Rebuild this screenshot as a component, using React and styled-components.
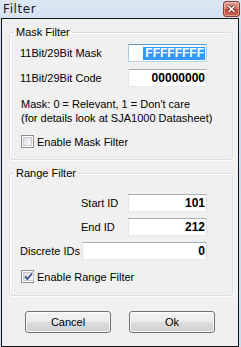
import React from 'react'
import styled, { createGlobalStyle } from 'styled-components'

const GlobalStyle = createGlobalStyle`
  html, body {
    margin: 0;
    padding: 0;
  }
  body {
    width: 241px;
    height: 347px;
    overflow: hidden;
    background: #d4e1f1;
  }
  * {
    box-sizing: border-box;
  }
`

const Window = styled.div`
  width: 241px;
  height: 347px;
  display: flex;
  flex-direction: column;
  background: linear-gradient(#dce7f4, #cbdaec 40px, #cfdcee);
  font-family: "Liberation Sans", Arial, sans-serif;
  font-size: 11px;
  color: #000;
`

const TitleBar = styled.div`
  height: 18px;
  flex: none;
  display: flex;
  align-items: center;
  justify-content: space-between;
  padding: 0 1px 0 3px;
`

const Title = styled.span`
  font-family: "DejaVu Sans", sans-serif;
  font-size: 12px;
  letter-spacing: 0.6px;
  color: #1b1b1b;
`

const CloseButton = styled.div`
  width: 17px;
  height: 16px;
  border: 1px solid #8d3b31;
  border-radius: 3px;
  background: linear-gradient(#e4a497, #d2705f 50%, #c24b3b 51%, #cc6450);
  box-shadow: inset 0 0 0 1px rgba(255, 255, 255, 0.35);
  display: flex;
  align-items: center;
  justify-content: center;
`

const Client = styled.div`
  flex: 1;
  margin: 0 2px 0 1px;
  border: 1px solid #141414;
  background: #f0f0f0;
  padding: 7px 5px 0 7px;
  display: flex;
  flex-direction: column;
`

const Group = styled.fieldset`
  margin: ${({ $top }) => $top || 0}px 0 0 0;
  padding: ${({ $pt }) => $pt}px 25px ${({ $pb }) => $pb}px 10px;
  border: 1px solid #d5dfe5;
  border-radius: 3px;
  box-shadow: inset 1px 1px 0 #fff, 1px 1px 0 #fff;
  min-width: 0;
  display: flex;
  flex-direction: column;
  gap: ${({ $gap }) => $gap}px;
`

const Legend = styled.legend`
  padding: 0 2px;
  margin-left: -6px;
  line-height: 13px;
  font-size: 11px;
`

const Row = styled.div`
  display: flex;
  align-items: center;
  height: 18px;
  padding-left: ${({ $indent }) => $indent || 0}px;
`

const Label = styled.span`
  width: ${({ $w }) => $w}px;
  flex: none;
  white-space: nowrap;
`

const Field = styled.div`
  height: 18px;
  width: ${({ $w }) => ($w ? `${$w}px` : 'auto')};
  flex: ${({ $w }) => ($w ? 'none' : 1)};
  border: 1px solid;
  border-color: ${({ $focus }) =>
    $focus ? '#5d97c9 #b3d1ec #b7d9ed #a9cae6' : '#abadb3 #dbdfe6 #e3e9ef #e2e3ea'};
  background: #fff;
  display: flex;
  align-items: center;
  justify-content: flex-end;
  padding-right: 1px;
  font-size: 12px;
  font-weight: bold;
`

const Selected = styled.span`
  background: #3399ff;
  color: #fff;
  line-height: 13px;
  padding: 0 1px 0 2px;
`

const Note = styled.div`
  margin-top: 3px;
  line-height: 14px;
  padding-left: 1px;
  white-space: nowrap;
`

const CheckRow = styled.div`
  display: flex;
  align-items: center;
  gap: 3px;
  height: 13px;
  margin-top: ${({ $mt }) => $mt}px;
  padding-left: 1px;
`

const Box = styled.span`
  width: 13px;
  height: 13px;
  flex: none;
  border: 1px solid #8e8f8f;
  background: #fff;
  padding: 1px;
  display: flex;
`

const BoxInner = styled.span`
  flex: 1;
  border: 1px solid #c7cbd1;
  background: linear-gradient(135deg, #d3d6db, #eeeff1 60%, #f8f8f8);
  display: flex;
  align-items: center;
  justify-content: center;
`

const Buttons = styled.div`
  margin-top: 15px;
  display: flex;
  justify-content: center;
  gap: 18px;
  padding-right: 2px;
`

const Button = styled.div`
  width: 86px;
  height: 22px;
  border: 1px solid #707070;
  border-radius: 3px;
  background: linear-gradient(#f3f3f3, #ebebeb 48%, #dddddd 52%, #cfcfcf);
  box-shadow: inset 0 0 0 1px #fbfbfb;
  display: flex;
  align-items: center;
  justify-content: center;
  font-size: 11px;
`

const Checkbox = ({ checked, mt, children }) => (
  <CheckRow $mt={mt}>
    <Box>
      <BoxInner>
        {checked && (
          <svg width="9" height="9" viewBox="0 0 9 9">
            <path d="M1 4.5 L3.5 7 L8 1.5" fill="none" stroke="#3c5194" strokeWidth="1.8" />
          </svg>
        )}
      </BoxInner>
    </Box>
    <span>{children}</span>
  </CheckRow>
)

const App = () => {
  return (
    <Window>
      <GlobalStyle />
      <TitleBar>
        <Title>Filter</Title>
        <CloseButton>
          <svg width="9" height="8" viewBox="0 0 9 8">
            <path d="M1.5 1 L7.5 7 M7.5 1 L1.5 7" stroke="#5a1f18" strokeWidth="3" />
            <path d="M1.5 1 L7.5 7 M7.5 1 L1.5 7" stroke="#fff" strokeWidth="1.6" />
          </svg>
        </CloseButton>
      </TitleBar>
      <Client>
        <Group $pt={5} $pb={11} $gap={7}>
          <Legend>Mask Filter</Legend>
          <Row>
            <Label $w={108}>11Bit/29Bit Mask</Label>
            <Field $w={79} $focus>
              <Selected>FFFFFFFF</Selected>
            </Field>
          </Row>
          <Row>
            <Label $w={108}>11Bit/29Bit Code</Label>
            <Field $w={79}>00000000</Field>
          </Row>
          <Note>
            Mask: 0 = Relevant, 1 = Don't care
            <br />
            (for details look at SJA1000 Datasheet)
          </Note>
          <Checkbox mt={3}>Enable Mask Filter</Checkbox>
        </Group>
        <Group $top={7} $pt={14} $pb={12} $gap={6}>
          <Legend>Range Filter</Legend>
          <Row $indent={61}>
            <Label $w={47}>Start ID</Label>
            <Field $w={79}>101</Field>
          </Row>
          <Row $indent={61}>
            <Label $w={47}>End ID</Label>
            <Field $w={79}>212</Field>
          </Row>
          <Row>
            <Label $w={62}>Discrete IDs</Label>
            <Field>0</Field>
          </Row>
          <Checkbox checked mt={4}>Enable Range Filter</Checkbox>
        </Group>
        <Buttons>
          <Button>Cancel</Button>
          <Button>Ok</Button>
        </Buttons>
      </Client>
    </Window>
  )
}

export default App
